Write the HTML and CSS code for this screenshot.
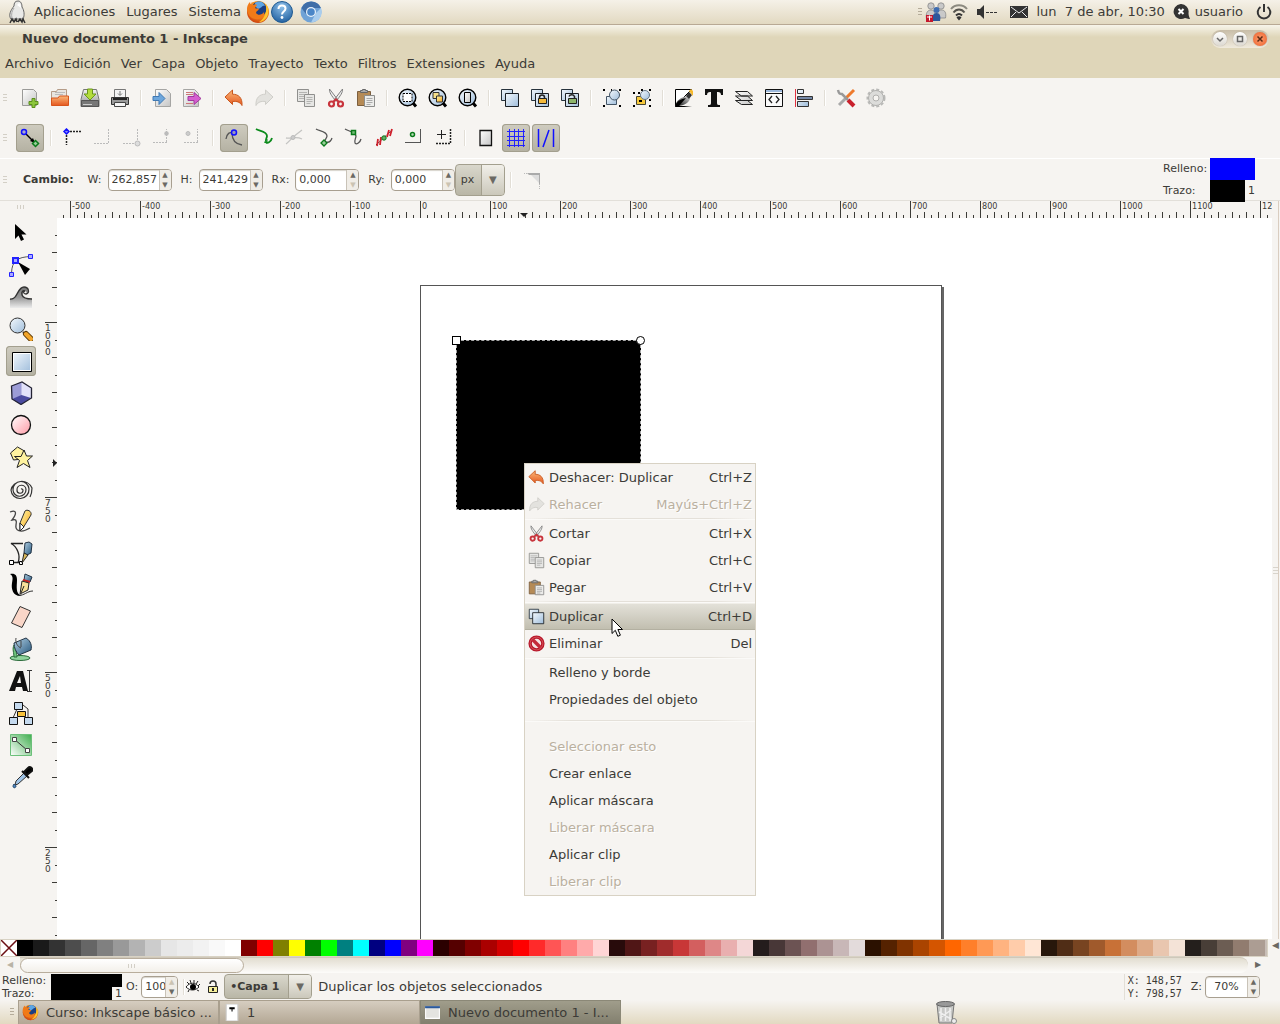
FILE: index.html
```html
<!DOCTYPE html>
<html lang="es">
<head>
<meta charset="utf-8">
<title>Nuevo documento 1 - Inkscape</title>
<link rel="stylesheet" href="styles.css">
</head>
<body>
<svg class="defs" width="0" height="0" aria-hidden="true">
  <defs>
    <linearGradient id="blue" x1="0" y1="0" x2="1" y2="1"><stop offset="0" stop-color="#f4f9fd"/><stop offset="1" stop-color="#9fbddb"/></linearGradient>
    <linearGradient id="paper" x1="0" y1="0" x2="1" y2="1"><stop offset="0" stop-color="#fff"/><stop offset="1" stop-color="#c4c4c4"/></linearGradient>
    <linearGradient id="orange" x1="0" y1="0" x2="0" y2="1"><stop offset="0" stop-color="#fbb878"/><stop offset="1" stop-color="#e4571f"/></linearGradient>
    <linearGradient id="grey" x1="0" y1="0" x2="0" y2="1"><stop offset="0" stop-color="#f2f2f2"/><stop offset="1" stop-color="#8f8f8f"/></linearGradient>
    <linearGradient id="wave" x1="0" y1="0" x2="0" y2="1"><stop offset="0" stop-color="#777"/><stop offset=".5" stop-color="#999"/><stop offset="1" stop-color="#ececec"/></linearGradient>
    <linearGradient id="gold" x1="0" y1="0" x2="1" y2="1"><stop offset="0" stop-color="#fff9a8"/><stop offset="1" stop-color="#f5a21c"/></linearGradient>
    <linearGradient id="pink" x1="0" y1="0" x2="1" y2="1"><stop offset="0" stop-color="#fff"/><stop offset="1" stop-color="#ff9aa6"/></linearGradient>
    <linearGradient id="green" x1="0" y1="1" x2="1" y2="0"><stop offset="0" stop-color="#fff"/><stop offset="1" stop-color="#3fae4e"/></linearGradient>
    <linearGradient id="steel" x1="0" y1="0" x2="1" y2="1"><stop offset="0" stop-color="#b5d2e6"/><stop offset="1" stop-color="#27587e"/></linearGradient>
    <linearGradient id="ink" x1="0" y1="1" x2="1" y2="0"><stop offset="0" stop-color="#000"/><stop offset="1" stop-color="#ddd"/></linearGradient>
    <radialGradient id="ball" cx=".5" cy=".25" r=".8"><stop offset="0" stop-color="#8fc1ea"/><stop offset="1" stop-color="#1d5c9c"/></radialGradient>
    <radialGradient id="fire" cx=".6" cy=".3" r=".8"><stop offset="0" stop-color="#ffd23c"/><stop offset=".5" stop-color="#f28a1c"/><stop offset="1" stop-color="#c4300c"/></radialGradient>
  </defs>
  <symbol id="i-undo" viewBox="0 0 20 20"><path d="M1 9 8.500 2v4.200c6 0 10 3.500 9.500 11.300-2-3.500-5-4.500-9.500-4v3z" fill="url(#orange)" stroke="#c9561c"/></symbol>
  <symbol id="i-redo" viewBox="0 0 20 20"><path d="M19 9 11.500 2v4.200c-6 0-10 3.500-9.500 11.300 2-3.500 5-4.500 9.500-4v3z" fill="#e3e2de" stroke="#cfcec9"/></symbol>
  <symbol id="i-cut" viewBox="0 0 20 20"><path d="M3.500 1c-.5 3 2 7 6.500 12l2-1zM16.500 1c.5 3-2 7-6.500 12l-2-1z" fill="#eee" stroke="#808080"/><g fill="none" stroke="#c8343c" stroke-width="2.200"><ellipse cx="5.500" cy="16" rx="2.500" ry="2.500"/><ellipse cx="14.500" cy="16" rx="2.500" ry="2.500"/><path d="M7 14l3-2.500 3 2.500"/></g></symbol>
  <symbol id="i-copy" viewBox="0 0 20 20"><g fill="#e6e6e4" stroke="#8f8f8d"><path d="M1.500 1.500h11v12h-11z"/><path d="M3 4.500h8M3 6.500h5M3 8.500h5M3 10.500h5" stroke="#b4b4b2"/><path d="M8.500 6.500h10v12h-10z"/><path d="M10.500 9.500h6M10.500 11.500h6M10.500 13.500h6M10.500 15.500h4" stroke="#b4b4b2"/></g></symbol>
  <symbol id="i-paste" viewBox="0 0 20 20"><path d="M1.500 3.500h13v14h-13z" fill="#b58a55" stroke="#7c5f3e"/><path d="M4.500 4.500h7v-2h-2v-1h-3v1h-2z" fill="#aaa" stroke="#666"/><path d="M8.500 7.500h10v11h-10z" fill="#ececea" stroke="#8d8d8b"/><path d="M10.500 10.500h6M10.500 12.500h6M10.500 14.500h6M10.500 16.500h4" stroke="#aaa"/></symbol>
  <symbol id="i-dup" viewBox="0 0 20 20"><path d="M1.500 1.500h11v11h-11z" fill="url(#blue)" stroke="#26323c"/><path d="M5.500 5.500h13v13h-13z" fill="url(#blue)" stroke="#1a1f24"/></symbol>
  <symbol id="i-magnifier" viewBox="0 0 20 20"><path d="m14.500 14.500 3.500 4" stroke="#000" stroke-width="3"/><circle cx="9.500" cy="9.500" r="8.300" fill="url(#blue)" stroke="#000" stroke-width="1.400"/></symbol>
  <symbol id="i-firefox" viewBox="0 0 24 24"><circle cx="12" cy="12" r="11" fill="url(#fire)"/><circle cx="13" cy="9" r="7.500" fill="#1c3f82"/><path d="M9 3c4-3 9-1 10 3-3-1-3 2-5 2-1 2-5 0-5-5z" fill="#5da5e4"/><path d="M1 9c0-3 1-5 3-7 0 2 1 3 3 3 2-1 3-1 4 0L9 8c1 1 3 0 4 1-1 2-3 2-3 4 2 3 6 2 8-1 1 5-4 8-8 7C5 19 1 14 1 9z" fill="#f07a18"/><path d="M20 4c3 4 3 9 1 13-2 3-5 5-8 5 6-4 8-10 7-18z" fill="#ffc52e"/></symbol>
</svg>

<header class="panel">
  <svg class="i24" viewBox="0 0 24 24"><path d="M14 1c3 0 4 3 4 6 2 3 3 8 1 12H7C4 15 7 10 10 6c0-3 1-5 4-5z" fill="#e9e9e7" stroke="#666"/><path d="M15 3c2 1 2 3 2 5l-4-3z" fill="#fff"/><path d="M10 8c-2 3-3 6-2 10" stroke="#aaa" fill="none"/><path d="M6 23l2-4 2 3 2-3 1 3M14 22l2-3 2 3 1-3 2 4" stroke="#333" stroke-width="1.500" fill="none"/></svg>
  <nav class="panel-menu"><a href="#">Aplicaciones</a><a href="#">Lugares</a><a href="#">Sistema</a></nav>
  <svg class="i24"><use href="#i-firefox"/></svg>
  <svg class="i24" viewBox="0 0 24 24"><circle cx="12" cy="12" r="10.500" fill="url(#ball)" stroke="#1f5a92"/><path d="M8.500 9c0-5 7-4.500 7-.5 0 3-3.500 3-3.500 6" fill="none" stroke="#fff" stroke-width="2"/><circle cx="12" cy="17.500" r="1.400" fill="#fff"/></svg>
  <svg class="i24 chromium" viewBox="0 0 24 24"><circle cx="12" cy="12" r="10.500" fill="#6fa2d6"/><path d="M2.500 8A10.500 10.500 0 0 1 22 8H12L7 14z" fill="#3f6ea8"/><path d="M22 8a10.500 10.500 0 0 1-10 14.500L17 13z" fill="#a9cdee"/><circle cx="12" cy="12" r="5" fill="#e9f2fa"/><circle cx="12" cy="12" r="3.800" fill="#4a86c8"/></svg>
  <div class="tray">
    <i class="grip"></i>
    <svg class="i22" viewBox="0 0 22 22"><g fill="#c9c9c9" stroke="#888" stroke-width=".8"><circle cx="6" cy="5" r="3.200"/><path d="M1.500 18c-1-6 1-9 4.500-9s5 3 4.500 9z"/><circle cx="16" cy="5" r="3.200"/><path d="M12 17c-1-6 1-8 4.500-8s5 3 4 8z"/></g><circle cx="11.500" cy="9" r="3" fill="#3f6db0"/><path d="M8 20c-1-5 0-8 3.500-8s4.500 3 3.500 8z" fill="#2c569b"/><path d="M1 14h7v7H1z" fill="#c4182c"/><path d="M2 16h5M4.500 14.500v5" stroke="#fff"/></svg>
    <svg class="i18" viewBox="0 0 18 18"><g fill="none" stroke-width="2"><path d="M1 6c4-5 12-5 16 0" stroke="#8c8a80"/><path d="M3.500 9.500c3-4 8-4 11 0" stroke="#55534d"/><path d="M6 12.500c2-2 4-2 6 0" stroke="#333"/></g><path d="M6.500 14.500a3 3 0 0 1 5 0L9 17.500z" fill="#333"/></svg>
    <svg class="vol" viewBox="0 0 22 18"><path d="M1 6h3l4-4v14l-4-4H1z" fill="#333"/><path d="M10 9.500h12" stroke="#333" stroke-dasharray="3 1"/></svg>
    <svg class="i18 mail" viewBox="0 0 18 18"><path d="M0 3h18v12H0z" fill="#333"/><path d="m1 4 8 6 8-6M1 14l5-5M17 14l-5-5" stroke="#eee" fill="none"/></svg>
    <span>lun&nbsp; 7 de abr, 10:30</span>
    <svg class="i18 chat" viewBox="0 0 18 18"><path d="M16 16l-4-1a7.500 7.500 0 1 1 3.500-5c0 3 1 4 1.500 6z" fill="#333"/><path d="m5.500 6 5 5m0-5-5 5" stroke="#fff" stroke-width="2"/></svg>
    <span>usuario</span>
    <svg class="i18 power" viewBox="0 0 18 18"><path d="M5.500 4a6.300 6.300 0 1 0 7 0M9 1v8" fill="none" stroke="#333" stroke-width="2"/></svg>
  </div>
</header>

<div class="titlebar">
  <h1>Nuevo documento 1 - Inkscape</h1>
  <div class="winbtns">
    <button aria-label="Minimizar"><svg viewBox="0 0 14 14"><path d="m4 6 3 3 3-3" fill="none" stroke="#666" stroke-width="1.500"/></svg></button>
    <button aria-label="Maximizar"><svg viewBox="0 0 14 14"><path d="M4.500 4.500h5v5h-5z" fill="none" stroke="#666" stroke-width="1.500"/></svg></button>
    <button class="close" aria-label="Cerrar"><svg viewBox="0 0 14 14"><path d="m4.500 4.500 5 5m0-5-5 5" stroke="#5b2a16" stroke-width="1.500"/></svg></button>
  </div>
</div>
<nav class="menubar"><a href="#">Archivo</a><a href="#">Edición</a><a href="#">Ver</a><a href="#">Capa</a><a href="#">Objeto</a><a href="#">Trayecto</a><a href="#">Texto</a><a href="#">Filtros</a><a href="#">Extensiones</a><a href="#">Ayuda</a></nav>

<div class="toolbar">
  <i class="grip"></i>
  <button aria-label="Nuevo"><svg viewBox="0 0 20 20"><path d="M2.500 1.500h11l3 3v13h-14z" fill="url(#paper)" stroke="#9a9a98"/><path d="M12 10.500h3v3h3v3h-3v3h-3v-3H9v-3h3z" fill="#8cc63c" stroke="#5b8f1c"/></svg></button>
  <button aria-label="Abrir"><svg viewBox="0 0 20 20"><path d="M1.500 17V3.500h5l1-2h9V17z" fill="#e8e5e0" stroke="#b59c88"/><path d="M5 4.500h10M5 6.500h8" stroke="#bbb"/><path d="M1.500 17.500V10H8l1.500-2h9v9.500z" fill="url(#orange)" stroke="#d8541c"/></svg></button>
  <button aria-label="Guardar"><svg viewBox="0 0 20 20"><path d="M3.500 1.500h13l2.500 10v7H1v-7z" fill="url(#grey)" stroke="#777"/><path d="M1.500 12.500h17v6h-17z" fill="#777" stroke="#555"/><path d="M3 16.500h9" stroke="#ccc"/><path d="M7.500 1h5v5h3.500l-6 6-6-6h3.500z" fill="#b4dc3c" stroke="#6b981c"/></svg></button>
  <button aria-label="Imprimir"><svg viewBox="0 0 20 20"><path d="M4.500 1.500h11v9h-11z" fill="#f2f2f2" stroke="#777"/><path d="M10 3v4M8 5.500l2 2 2-2" stroke="#777" fill="none"/><path d="M1.500 9.500h17v7h-17z" fill="#999" stroke="#333"/><path d="M3 11h14" stroke="#222" stroke-width="2"/><path d="M4.500 14.500h11v4h-11z" fill="#f4f4f4" stroke="#444"/></svg></button>
  <i class="sep"></i>
  <button aria-label="Importar"><svg viewBox="0 0 20 20"><path d="M3.500 1.500h11l4 4v13h-15z" fill="url(#paper)" stroke="#a5a5a3"/><path d="M1 8.500h6v-4l6 6-6 6v-4H1z" fill="#6da6dc" stroke="#3e78b4"/></svg></button>
  <button aria-label="Exportar"><svg viewBox="0 0 20 20"><path d="M1.500 1.500h11l4 4v13h-15z" fill="url(#paper)" stroke="#a5a5a3"/><path d="M4 4.500h7M4 6.500h7M4 15.500h7" stroke="#c77"/><path d="M6 8.500h6v-4l7 6-7 6v-4H6z" fill="#d65fd0" stroke="#a03a9c"/></svg></button>
  <i class="sep"></i>
  <button aria-label="Deshacer"><svg><use href="#i-undo"/></svg></button>
  <button aria-label="Rehacer" disabled><svg><use href="#i-redo"/></svg></button>
  <i class="sep"></i>
  <button aria-label="Copiar"><svg><use href="#i-copy"/></svg></button>
  <button aria-label="Cortar"><svg><use href="#i-cut"/></svg></button>
  <button aria-label="Pegar"><svg><use href="#i-paste"/></svg></button>
  <i class="sep"></i>
  <button aria-label="Zoom a selección"><svg viewBox="0 0 20 20"><use href="#i-magnifier" width="20" height="20"/><path d="M5 5.500h9v8H5z" fill="#fff" stroke="#000" stroke-dasharray="2 1"/></svg></button>
  <button aria-label="Zoom a dibujo"><svg viewBox="0 0 20 20"><use href="#i-magnifier" width="20" height="20"/><path d="M5 4.500h6v6H5z" fill="#f6e08a" stroke="#333"/><path d="M8.500 8h6v6h-6z" fill="url(#gold)" stroke="#333"/></svg></button>
  <button aria-label="Zoom a página"><svg viewBox="0 0 20 20"><use href="#i-magnifier" width="20" height="20"/><path d="M6.500 4.500h6v10h-6z" fill="url(#paper)" stroke="#000"/></svg></button>
  <i class="sep"></i>
  <button aria-label="Duplicar"><svg><use href="#i-dup"/></svg></button>
  <button aria-label="Clonar"><svg viewBox="0 0 20 20"><use href="#i-dup" width="20" height="20"/><path d="M9.500 11V9.500a2.500 2.500 0 0 1 5 0V11" fill="none" stroke="#222" stroke-width="1.500"/><path d="M8.500 10.500h8v5h-8z" fill="#f4b93a" stroke="#222"/></svg></button>
  <button aria-label="Desvincular clon"><svg viewBox="0 0 20 20"><use href="#i-dup" width="20" height="20"/><path d="M9 8.500a3 3 0 0 1 5.500 0V11" fill="none" stroke="#222" stroke-width="1.500"/><path d="M8.500 10.500h8v5h-8z" fill="#8cb46a" stroke="#222"/></svg></button>
  <i class="sep"></i>
  <button aria-label="Agrupar"><svg viewBox="0 0 20 20"><path d="M1 1h2v2H1zM17 1h2v2h-2zM1 17h2v2H1zM17 17h2v2h-2zM9 1h1v2H9z"/><path d="M4.500 8.500h10v8h-10z" fill="url(#blue)" stroke="#456"/><circle cx="12.500" cy="7" r="5" fill="url(#blue)" stroke="#456"/></svg></button>
  <button aria-label="Desagrupar"><svg viewBox="0 0 20 20"><path d="M1 4h2v2H1zM6 4h2v2H6zM17 1h2v2h-2zM1 17h2v2H1zM17 17h2v2h-2zM17 11h2v2h-2zM9 1h2v2H9z"/><path d="M4.500 8.500h9v8h-9z" fill="#f7c93c" stroke="#443"/><circle cx="13" cy="7" r="4.500" fill="url(#blue)" stroke="#678"/><path d="M7 12h3v2H7z"/></svg></button>
  <i class="sep"></i>
  <button aria-label="Relleno y borde"><svg viewBox="0 0 20 20"><path d="M1.500 1.500h16l-16 16z" fill="#fff" stroke="#000"/><path d="M1 18.500C2 12 8 9 13 8l3 3c-2 5-8 7-15 7.500z" fill="url(#ink)"/><path d="M1 19C3 12 8 11 12 10l-7 8h13L10 19z"/><path d="m12 8 3-4 3 3-3 4z" fill="#333"/><path d="m15 3 2-2 2 2v5z" fill="#f6b92c"/></svg></button>
  <button aria-label="Texto y tipografía"><svg viewBox="0 0 20 20"><path d="M1 1h18v6h-2c0-2-1-3-3-3h-1v11c0 2 1 2 3 2v2H4v-2c2 0 3 0 3-2V4H6C4 4 3 5 3 7H1z" fill="#111"/></svg></button>
  <button aria-label="Capas"><svg viewBox="0 0 20 20"><g fill="url(#paper)" stroke="#222"><path d="M1.500 12.500h12l5 4h-11zM1.500 8h12l5 4.500h-11zM1.500 3.500h12l5 4.500h-11z"/></g></svg></button>
  <button aria-label="Editor XML"><svg viewBox="0 0 20 20"><path d="M1.500 1.500h17v17h-17z" fill="#fafafa" stroke="#111"/><path d="M2 3h16" stroke="#9db9dc" stroke-width="2"/><path d="M1 5.500h18" stroke="#111"/><path d="m8 8-3 3.500L8 15M12 8l3 3.500-3 3.500" fill="none" stroke="#222" stroke-width="1.300"/></svg></button>
  <button aria-label="Alinear y distribuir"><svg viewBox="0 0 20 20"><path d="M1.500 1v18" stroke="#e03040"/><path d="M3.500 1.500h6v4h-6zM3.500 13.500h11v5h-11z" fill="url(#blue)" stroke="#333"/><path d="M3.500 8.500h15v3h-15z" fill="#7488a8" stroke="#333"/></svg></button>
  <i class="sep"></i>
  <button aria-label="Preferencias"><svg viewBox="0 0 20 20"><path d="m3 17 8-8" stroke="#aaa" stroke-width="3"/><path d="m10 10 8-8" stroke="#ee7a2c" stroke-width="3"/><path d="M2 2c1 4 2 4 4 4l6 6" fill="none" stroke="#999" stroke-width="2.500"/><path d="m12 12 6 6" stroke="#c8202c" stroke-width="4"/></svg></button>
  <button aria-label="Propiedades del documento"><svg viewBox="0 0 20 20"><circle cx="10" cy="10" r="8.500" fill="none" stroke="#b9b9b7" stroke-width="2" stroke-dasharray="3 2"/><circle cx="10" cy="10" r="7.500" fill="#dcdcda" stroke="#b0b0ae"/><circle cx="10" cy="10" r="3" fill="#f6f4f1" stroke="#b0b0ae"/></svg></button>
</div>

<div class="toolbar">
  <i class="grip"></i>
  <button class="on" aria-label="Activar ajuste"><svg viewBox="0 0 20 20"><path d="m5 5 8 8" stroke="#000" stroke-width="1.500"/><path d="m15 15-5-2 3-3z"/><circle cx="4" cy="4" r="2.500" fill="#aac" stroke="#11f" stroke-width="1.500"/><path d="m15.500 12.500 3 3-3 3-3-3z" fill="#9c9" stroke="#0a7a1a" stroke-width="1.500"/></svg></button>
  <i class="sep"></i>
  <button aria-label="Ajustar cajas"><svg viewBox="0 0 20 20"><path d="M5 3.500h14M4.500 4v13" stroke="#222" stroke-width="1.500" stroke-dasharray="2 1"/><path d="m4.500 1 2.500 2.500L4.500 6 2 3.500z" fill="#88f" stroke="#11f" stroke-width="1.500"/></svg></button>
  <button disabled aria-label="Bordes"><svg viewBox="0 0 20 20"><path d="M2 15.500h15M16.500 15V1" stroke="#bbb" stroke-dasharray="2 1"/></svg></button>
  <button disabled aria-label="Esquinas"><svg viewBox="0 0 20 20"><path d="M1 15.500h13M15.500 12V1" stroke="#bbb" stroke-dasharray="2 1"/><circle cx="15.500" cy="15.500" r="2.500" fill="#ddd" stroke="#bbb"/></svg></button>
  <button disabled aria-label="Puntos medios"><svg viewBox="0 0 20 20"><path d="M1 14.500h15M14.500 14V1" stroke="#bbb" stroke-dasharray="2 1"/><circle cx="14.500" cy="5.500" r="2.200" fill="#bbb"/></svg></button>
  <button disabled aria-label="Centros"><svg viewBox="0 0 20 20"><path d="M2 14.500h15M15.500 14V1" stroke="#bbb" stroke-dasharray="2 1"/><circle cx="6" cy="5.500" r="2" fill="#ccc" stroke="#bbb"/></svg></button>
  <i class="sep"></i>
  <button class="on" aria-label="Ajustar nodos"><svg viewBox="0 0 20 20"><path d="M2 11C3 5 6 4 8 5c0 6 3 11 10 12" fill="none" stroke="#555" stroke-width="1.300"/><circle cx="10" cy="4.500" r="2.500" fill="#99b" stroke="#11f" stroke-width="1.500"/></svg></button>
  <button aria-label="Trayectos"><svg viewBox="0 0 20 20"><path d="M2 1c3 2 11 2 11 7 0 2-2 4-1 6s5 0 6-4" fill="none" stroke="#0a8a1a" stroke-width="1.800"/><path d="m10 14 3 1v-4" fill="none" stroke="#0a8a1a"/></svg></button>
  <button disabled aria-label="Intersecciones"><svg viewBox="0 0 20 20"><path d="M2 16C5 14 8 9 18 2M2 10c5 1 10-2 16 1" fill="none" stroke="#c4c4c2" stroke-width="1.300"/><circle cx="9" cy="9.500" r="2" fill="#ccc" stroke="#bbb"/></svg></button>
  <button aria-label="Nodos cúspide"><svg viewBox="0 0 20 20"><path d="M2 1c3 2 11 2 11 7 0 2-3 4-2 6M12 14c3 1 5-1 6-4" fill="none" stroke="#555" stroke-width="1.300"/><path d="m10 12 3 3-3 3-3-3z" fill="#9c9" stroke="#0a7a1a" stroke-width="1.300"/></svg></button>
  <button aria-label="Nodos suaves"><svg viewBox="0 0 20 20"><path d="M1 1c3 2 10 3 11 7 0 2-2 5-1 7s5 0 6-4" fill="none" stroke="#555" stroke-width="1.300"/><path d="M7.500 2.500h4v4h-4z" fill="#7b7" stroke="#0a7a1a" stroke-width="1.500"/></svg></button>
  <button aria-label="Puntos medios de segmento"><svg viewBox="0 0 20 20"><path d="m2 17 15-14" stroke="#222" stroke-dasharray="2 1"/><path d="m3 18 1-7M6 17l1-8M13 9l2-7M16 8l2-7" stroke="#d0202c" stroke-width="1.800"/><circle cx="10" cy="10" r="2.200" fill="#6a6" stroke="#0a7a1a"/></svg></button>
  <button aria-label="Centros de objeto"><svg viewBox="0 0 20 20"><path d="M1 14.500h16M16.500 15V1" stroke="#555"/><circle cx="8.500" cy="6.500" r="2" fill="#bdb" stroke="#0a7a1a" stroke-width="1.500"/></svg></button>
  <button aria-label="Centro de rotación"><svg viewBox="0 0 20 20"><path d="M7.500 2v9M3 6.500h9" stroke="#222"/><path d="M2 15.500h15M16.500 15V1" stroke="#222" stroke-width="1.500" stroke-dasharray="2 1"/></svg></button>
  <i class="sep"></i>
  <button aria-label="Borde de página"><svg viewBox="0 0 20 20"><path d="M4 2.500h11.500v15H4z" fill="url(#paper)" stroke="#111" stroke-width="1.300"/></svg></button>
  <button class="on" aria-label="Rejilla"><svg viewBox="0 0 20 20"><path d="M1 3.500h18M1 8.500h18M1 12.500h18M1 17.500h18M3.500 1v18M8.500 1v18M12.500 1v18M17.500 1v18" stroke="#22f"/></svg></button>
  <button class="on" aria-label="Guías"><svg viewBox="0 0 20 20"><path d="M2.500 1v18M17.500 1v18M7 19l6-17" stroke="#11f" stroke-width="1.500"/></svg></button>
</div>

<div class="controls">
  <i class="grip"></i>
  <b>Cambio:</b>
  <label for="w">W:</label><span class="spin"><input id="w" value="262,857"><span><button aria-label="Más">▲</button><button aria-label="Menos">▼</button></span></span>
  <label for="h">H:</label><span class="spin"><input id="h" value="241,429"><span><button aria-label="Más">▲</button><button aria-label="Menos">▼</button></span></span>
  <label for="rx">Rx:</label><span class="spin"><input id="rx" value="0,000"><span><button aria-label="Más">▲</button><button aria-label="Menos" disabled>▼</button></span></span>
  <label for="ry">Ry:</label><span class="spin"><input id="ry" value="0,000"><span><button aria-label="Más">▲</button><button aria-label="Menos" disabled>▼</button></span></span>
  <span class="combo unit-combo"><select aria-label="Unidad"><option>px</option></select><span>▼</span></span>
  <i class="sep"></i>
  <button class="plain" aria-label="Esquinas rectas" disabled><svg viewBox="0 0 20 20"><path d="M4 3h13v12h-1V5H6z" fill="#aaa"/><path d="M1 3.500h4M16.500 14v5" stroke="#bbb" stroke-dasharray="1 1"/><path d="M8 5h8v8z" fill="#ddd"/></svg></button>
  <dl class="style"><dt>Relleno:</dt><dd><i class="fill"></i></dd><dt>Trazo:</dt><dd><i class="stroke"></i>1</dd></dl>
</div>

<main>
  <aside class="toolbox">
    <i class="grip across"></i>
    <button aria-label="Seleccionar"><svg viewBox="0 0 24 24"><path d="M6 3v15l3.500-3.500L12 20l3-1.500-2.500-5h5z"/></svg></button>
    <button aria-label="Nodos"><svg viewBox="0 0 24 24"><path d="M2.500 20C3 8 8 4 22 3.500" fill="none" stroke="#555"/><path d="m9 9 12 7-5 6z"/><g fill="#aaf" stroke="#22f"><path d="M.5 19.500h4v4h-4zM19.500 1.500h4v4h-4z"/><path d="M4 5h5v5H4z" stroke-width="2"/></g></svg></button>
    <button aria-label="Retoque"><svg viewBox="0 0 24 24"><path d="M1 14c8 1 7-12 14-12 5 0 6 6 2 7 2-3-2-4-3-1-1 4 3 7 9 6v9H1z" fill="url(#wave)"/><path d="M1 14c8 1 7-12 14-12 5 0 6 6 2 7-3 0-3-3-1-3-2-1-4 1-3 4s4 4 10 4" fill="none" stroke="#333" stroke-width="1.300"/></svg></button>
    <button aria-label="Zoom"><svg viewBox="0 0 24 24"><path d="m14 15 3 3" stroke="#333" stroke-width="2"/><path d="m17 17 5 5" stroke="#5c3a08" stroke-width="6" stroke-linecap="round"/><path d="m17 17 5 5" stroke="#f2a52a" stroke-width="4" stroke-linecap="round"/><circle cx="8.500" cy="8.500" r="7.500" fill="url(#blue)" stroke="#333"/></svg></button>
    <button class="on" aria-label="Rectángulo"><svg viewBox="0 0 24 24"><path d="M3.500 3.500h19v19h-19z" fill="url(#blue)" stroke="#000"/><path d="M4.500 4.500h17v17h-17z" fill="none" stroke="#fff"/></svg></button>
    <button aria-label="Caja 3D"><svg viewBox="0 0 24 24"><path d="M2.500 5 13 1l9.500 6v10L12 23.500 3 18z" fill="#e2e2fa"/><path d="m2.500 5 10-4v14L3 18z" fill="#9c9cd6"/><path d="m3 18 9.500-4 9.500 3-10 6.500z" fill="#4a4aa0"/><path d="M2.500 5 13 1l9.500 6v10L12 23.500 3 18z" fill="none" stroke="#223" stroke-width="1.300"/></svg></button>
    <button aria-label="Elipse"><svg viewBox="0 0 24 24"><circle cx="12" cy="12" r="9.500" fill="url(#pink)" stroke="#111" stroke-width="1.300"/></svg></button>
    <button aria-label="Estrella"><svg viewBox="0 0 24 24"><g fill="#fff3a0" stroke="#222"><path d="m1.500 8 7-6 7 4-2 8-9 1z"/><path d="m15 5 2.500 6h6l-5 4.500 2.500 7-6.500-4-6.500 4 2.500-7-5-4h6.500z"/></g></svg></button>
    <button aria-label="Espiral"><svg viewBox="0 0 24 24"><path d="M12 12a1.500 1.500 0 0 1 2 1.500A3 3 0 0 1 8 13a4.500 4.500 0 0 1 9-.5 6.500 6.500 0 0 1-13 .5 8 8 0 0 1 16-1 9 9 0 0 1-18 1A11 10.500 0 0 1 23 11c0 4-.5 6-2 9" fill="none" stroke="#333" stroke-width="1.200"/></svg></button>
    <button aria-label="Lápiz"><svg viewBox="0 0 24 24"><path d="M1 3c8-3 6 3 2 8 4-1 5 0 4 5s4 9 14 3" fill="none" stroke="#444" stroke-width="1.300"/><path d="M16 2c2-2 7 0 6 4l-8 13-3 2v-7z" fill="url(#gold)" stroke="#333"/><path d="m11 14 4 4-4 4z" fill="#fff" stroke="#222"/></svg></button>
    <button aria-label="Pluma"><svg viewBox="0 0 24 24"><path d="M14 2.500H2c6 3 10 12 7 19M2 21.500h12" fill="none" stroke="#222" stroke-width="1.300"/><path d="M.5 19.500h4v4h-4zM10.500 20.500h3v3h-3z" fill="#fff" stroke="#000"/><path d="m16 2 4-1 3 2-1 9-4 2-3-2z" fill="url(#steel)" stroke="#234"/><path d="m15 12 4 2-6 8z" fill="#d9b95c" stroke="#222"/></svg></button>
    <button aria-label="Caligrafía"><svg viewBox="0 0 24 24"><path d="M1 1c5-1 7 1 7 6 0 6-2 14 5 16C4 24 2 16 3 10 4 5 4 3 1 1z"/><path d="M10 22c5 1 8-4 14-4" fill="none" stroke="#333"/><path d="m16 1 7 3-2 5-6-2z" fill="url(#steel)" stroke="#234"/><path d="m14 7 7 2" stroke="#c22" stroke-width="2"/><path d="m13 8 7 2-1 7-8 4z" fill="#f7e09a" stroke="#222"/><path d="m12 20 3-7" stroke="#222"/></svg></button>
    <button aria-label="Borrador"><svg viewBox="0 0 24 24"><path d="M11 1.500 21.500 6 13 22.500 2.500 18z" fill="#f9d6c8" stroke="#333"/></svg></button>
    <button aria-label="Cubo de pintura"><svg viewBox="0 0 24 24"><ellipse cx="11" cy="21" rx="10" ry="2.500" fill="#8fd39c" stroke="#2a6a3a"/><path d="M5 8c-2 4 0 8 0 12h3c0-4-2-7 0-10z" fill="#6fc47e" stroke="#2a6a3a"/><path d="m5 6 12-5c5 3 6 8 5 12L10 18C7 15 5 11 5 6z" fill="url(#steel)" stroke="#234"/><path d="M7 1c-1 5 2 9 5 10M12 4v6" fill="none" stroke="#444"/></svg></button>
    <button aria-label="Texto"><svg viewBox="0 0 24 24"><path d="M8 2h6l5 20h-5l-1-4H7l-1 4H0zM11 7l-3 7h4z" fill="#111" fill-rule="evenodd"/><path d="M18 1.500h5M18 22.500h5M20.500 2v20" stroke="#333"/></svg></button>
    <button aria-label="Conector"><svg viewBox="0 0 24 24"><path d="m8 8-4 9M14 4l5 4v9" fill="none" stroke="#333"/><path d="M5.500 1.500h8v7h-8zM.5 16.500h8v7h-8zM15.500 16.500h8v7h-8z" fill="#c4d9ee" stroke="#111"/><path d="M8.500 10.500h8v5h-8z" fill="#f7c23c" stroke="#111"/></svg></button>
    <button aria-label="Degradado"><svg viewBox="0 0 24 24"><path d="M1.500 1.500h21v21h-21z" fill="url(#green)" stroke="#6cc07a"/><path d="m5 6 13 11" stroke="#333"/><path d="M3.500 4.500h4v4h-4zM16.500 15.500h4v4h-4z" fill="#fff" stroke="#444"/></svg></button>
    <button aria-label="Cuentagotas"><svg viewBox="0 0 24 24"><path d="m15 8 3 3-9 8-3 1 1-4z" fill="#9fc3e6" stroke="#333"/><path d="m13 6 7 7M15 7l4-4c2-2 5 0 4 3l-5 4z" stroke="#111" stroke-width="2"/><path d="M5 19c-3 4 2 5 2 2 0-1-1-1-2-2z" fill="#4c86c4" stroke="#246"/></svg></button>
  </aside>
  <div class="hruler"><div id="hunits"></div><i class="hmark"></i></div>
  <div class="vruler"><div id="vunits"></div><i class="vmark"></i></div>
  <section class="canvas">
    <div class="sheet"></div>
    <div class="shape"><i class="h-square"></i><i class="h-round"></i></div>
    <div class="context" role="menu">
      <button><svg><use href="#i-undo"/></svg>Deshacer: Duplicar<kbd>Ctrl+Z</kbd></button>
      <button disabled><svg><use href="#i-redo"/></svg>Rehacer<kbd>Mayús+Ctrl+Z</kbd></button>
      <hr>
      <button><svg><use href="#i-cut"/></svg>Cortar<kbd>Ctrl+X</kbd></button>
      <button><svg><use href="#i-copy"/></svg>Copiar<kbd>Ctrl+C</kbd></button>
      <button><svg><use href="#i-paste"/></svg>Pegar<kbd>Ctrl+V</kbd></button>
      <hr>
      <button class="hover"><svg><use href="#i-dup"/></svg>Duplicar<kbd>Ctrl+D</kbd></button>
      <button><svg viewBox="0 0 20 20"><circle cx="10" cy="10" r="7.500" fill="#f4e4e4" stroke="#b8182c" stroke-width="4"/><path d="m5 5 10 10" stroke="#c42a3a" stroke-width="4"/><circle cx="10" cy="10" r="7.500" fill="none" stroke="#d8585c"/></svg>Eliminar<kbd>Del</kbd></button>
      <hr>
      <button class="noicon">Relleno y borde</button>
      <button class="noicon">Propiedades del objeto</button>
      <hr class="wide">
      <button class="noicon" disabled>Seleccionar esto</button>
      <button class="noicon">Crear enlace</button>
      <button class="noicon">Aplicar máscara</button>
      <button class="noicon" disabled>Liberar máscara</button>
      <button class="noicon">Aplicar clip</button>
      <button class="noicon" disabled>Liberar clip</button>
    </div>
    <svg class="pointer" viewBox="0 0 12 20"><path d="M1 1v14.500l3.300-3.200 2.500 6 2.600-1.100-2.500-5.700H11.500z" fill="#fff" stroke="#000"/></svg>
  </section>
  <div class="dock"><i></i></div>
</main>

<div class="palette-row">
  <div class="palette" id="palette"><button class="none" aria-label="Ninguno"><svg viewBox="0 0 16 16"><path d="m0 0 16 16M16 0 0 16" stroke="#6b0f14" stroke-width="1.500"/></svg></button></div>
  <button class="plain arrow" aria-label="Menú de paleta">◀</button>
</div>
<div class="scroll"><span class="off">◀</span><div class="track"><div class="thumb"><i class="grip across"></i></div></div><span>▶</span></div>

<footer class="status">
  <dl class="style"><dt>Relleno:</dt><dd><i class="fill"></i></dd><dt>Trazo:</dt><dd><i class="stroke"></i>1</dd></dl>
  <label for="o">O:</label><span class="spin opacity"><input id="o" value="100"><span><button aria-label="Más" disabled>▲</button><button aria-label="Menos">▼</button></span></span>
  <i class="sep"></i>
  <button class="plain" aria-label="Visibilidad"><svg viewBox="0 0 16 16"><path d="M1 8c4-5 9-5 13 0-4 4-9 4-13 0z" fill="#fff" stroke="#222"/><circle cx="8" cy="8" r="3"/><path d="M4 5 2 3M6 4 5 1M9 4V1M11 5l2-3M13 7l2-2M4 11l-1 2M12 11l2 1" stroke="#222"/></svg></button>
  <button class="plain" aria-label="Bloqueo"><svg viewBox="0 0 16 16"><path d="M5 5c0-4 6-4 6 0v3" fill="none" stroke="#333" stroke-width="1.500"/><path d="M3.500 7.500h9v6h-9z" fill="#f5ee9a" stroke="#222"/><path d="M8 9v3" stroke="#222" stroke-width="2"/></svg></button>
  <span class="combo layer-combo"><select aria-label="Capa"><option>•Capa 1</option></select><span>▼</span></span>
  <p>Duplicar los objetos seleccionados</p>
  <dl class="coords"><dt>X:</dt><dd>148,57</dd><dt>Y:</dt><dd>798,57</dd></dl>
  <label for="z">Z:</label><span class="spin zoom"><input id="z" value="70%"><span><button aria-label="Más">▲</button><button aria-label="Menos">▼</button></span></span>
</footer>
<div class="taskbar">
  <i class="grip"></i>
  <button><svg viewBox="0 0 24 24"><use href="#i-firefox"/></svg>Curso: Inkscape básico ...</button>
  <button><svg viewBox="0 0 16 16"><path d="M3 0h11v16H3z" fill="#fff" stroke="#ccc"/><path d="M6 3h5v2H9v2H8V5H6z"/></svg><span>1</span></button>
  <button class="active"><svg viewBox="0 0 16 16"><path d="M1.500 2.500h13v11h-13z" fill="#e4e4e0" stroke="#fff"/><path d="M1 3h14" stroke="#2c5a9c" stroke-width="2"/></svg>Nuevo documento 1 - I...</button>
  <svg class="trash" viewBox="0 0 24 24"><path d="M3 4h17l-2 19H5z" fill="#c8c9c7" stroke="#777"/><ellipse cx="11.500" cy="4" rx="9" ry="2.500" fill="#999" stroke="#666"/><path d="M7 8v13M11.500 8v13M16 8v13M5 12l12 7M17 10 6 18" stroke="#efefef" stroke-width="1.500"/><circle cx="20" cy="21" r="2.500" fill="#eee" stroke="#888"/></svg>
</div>
<script src="main.js"></script>
</body>
</html>
```
FILE: styles.css
```css
* { box-sizing: border-box; }
body {
  margin: 0; height: 100vh; min-width: 960px; display: flex; flex-direction: column; overflow: hidden;
  background: #f6f4f1; color: #3c3b37; font: 13px/16px "DejaVu Sans", sans-serif;
}
button, input, select { font: inherit; color: inherit; margin: 0; padding: 0; border: 0; background: none; }
a { color: inherit; text-decoration: none; }
svg { display: block; flex: none; }
p, dl, dd, h1 { margin: 0; }
.defs { position: absolute; }
.grip { flex: none; width: 4px; height: 8px; background: repeating-linear-gradient(#d3cfc6 0 1px, transparent 1px 3px); }
.grip.across { width: 8px; height: 4px; background: repeating-linear-gradient(90deg, #d3cfc6 0 1px, transparent 1px 3px); }
.sep { flex: none; width: 12px; height: 16px; background: linear-gradient(90deg, transparent 5px, #e2ded6 5px 6px, #fff 6px 7px, transparent 7px); }
.plain { display: flex; align-items: center; justify-content: center; }

/* desktop panel */
.panel { display: flex; align-items: center; height: 25px; padding: 0 7px 0 4px; border-bottom: 1px solid #b8a994; background: linear-gradient(#f5f1e8, #e2d9c1); }
.i24 { width: 24px; height: 24px; }
.i22 { width: 22px; height: 22px; }
.i18 { width: 18px; height: 18px; }
.chromium { margin-left: 5px; }
.panel-menu { display: flex; gap: 11px; padding: 0 5px 0 6px; }
.tray { display: flex; align-items: center; margin-left: auto; }
.tray .i22 { margin: 0 3px; }
.tray .vol { width: 22px; height: 18px; margin: 0 12px 0 8px; }
.tray .mail { margin-right: 8px; }
.tray .chat { margin: 0 4px 0 8px; }
.tray .power { margin-left: 12px; }
.tray .grip { background: repeating-linear-gradient(#b5ac9a 0 1px, transparent 1px 3px); }

.titlebar { display: flex; align-items: center; justify-content: space-between; height: 27px; padding: 0 11px 0 22px; background: linear-gradient(#f7f4ea, #dfd6b9 12px); }
.titlebar h1 { font-size: 13px; line-height: 16px; }
.winbtns { display: flex; gap: 6px; padding: 2px; border-radius: 9px; background: linear-gradient(#c8bda8, #f0eadd); }
.winbtns button { width: 14px; height: 14px; border-radius: 7px; background: linear-gradient(#fff, #dcd8d0); box-shadow: 0 0 1px #8d8575; }
.winbtns .close { background: radial-gradient(#ffa070, #ea5c28); }
.menubar { display: flex; gap: 10px; height: 26px; padding: 4px 5px; background: #dfd6b9; }

/* toolbars */
.toolbar { display: flex; align-items: center; height: 40px; }
.toolbar .grip, .controls > .grip { margin: 0 8px 0 3px; }
.toolbar button { display: flex; align-items: center; justify-content: center; width: 28px; height: 28px; margin: 0 1px; border-radius: 4px; }
.toolbar svg { width: 20px; height: 20px; }
.on { background: linear-gradient(#cfccc0, #b4b1a2); box-shadow: inset 0 0 0 1px #a39f8e; }
.controls { display: flex; align-items: center; height: 43px; border-top: 1px solid #fff; border-bottom: 1px solid #e2dfd9; font-size: 11px; line-height: 14px; }
.controls b { margin: 0 14px 0 8px; }
.controls label { margin-right: 6px; }
.controls .spin { width: 64px; margin-right: 9px; }
.controls .plain svg { width: 20px; height: 20px; margin-left: 6px; }
.spin { display: flex; flex: none; height: 22px; border: 1px solid #a89f90; border-radius: 4px; background: #fff; overflow: hidden; box-shadow: inset 0 1px 1px #d8d4cc; }
.spin input { flex: 1; min-width: 0; padding-left: 3px; font-size: 11px; outline: 0; }
.spin > span { display: flex; flex-direction: column; flex: none; width: 12px; border-left: 1px solid #c9c3b8; background: #f0ede7; }
.spin button { flex: 1; min-height: 0; font-size: 7px; line-height: 10px; color: #6b6963; }
.spin button:disabled { color: #cbc3b2; }
.combo { display: grid; flex: none; border: 1px solid #a39f8e; border-radius: 4px; background: linear-gradient(#d9d7cc, #b9b6a6); font-size: 11px; }
.combo select { grid-area: 1 / 1; appearance: none; padding-left: 5px; }
.combo > span { grid-area: 1 / 1; justify-self: end; display: flex; align-items: center; justify-content: center; width: 23px; border-left: 1px solid #a39f8e; background: linear-gradient(#f1efe9, #cbc8bb); color: #6b6963; font-size: 10px; pointer-events: none; border-radius: 0 3px 3px 0; }
.controls .spin + .combo { margin-left: -9px; }
.unit-combo { width: 50px; height: 32px; }
.style { display: grid; grid-template-columns: 47px auto; align-items: center; }
.style dd { display: flex; align-items: center; gap: 3px; }
.controls .style { margin: 0 25px 0 auto; grid-auto-rows: 22px; }
.style i { width: 45px; height: 22px; background: #00f; }
.style i.stroke { width: 35px; background: #000; }

/* work area */
main { flex: 1; min-height: 0; display: grid; grid-template: 17px minmax(0, 1fr) / 43px 14px minmax(0, 1fr) 8px; }
.toolbox { grid-row: 1 / 3; display: flex; flex-direction: column; align-items: center; gap: 2px; min-height: 0; padding-right: 2px; }
.toolbox .grip { margin: 4px 0 7px; }
.toolbox button { display: flex; align-items: center; justify-content: center; flex: none; width: 30px; height: 30px; border-radius: 4px; }
.toolbox svg { width: 24px; height: 24px; }
.hruler { grid-column: 2 / 4; position: relative; padding-left: 14px; overflow: hidden; font-size: 9px; line-height: 10px; }
#hunits { display: flex; overflow: hidden; height: 17px; }
#hunits span { flex: 0 0 70px; height: 17px; padding-left: 1px; border-left: 1px solid #3c3b37; font-family: "DejaVu Sans Condensed", "DejaVu Sans", sans-serif; font-stretch: condensed;
  background:
    repeating-linear-gradient(90deg, transparent 0 13px, #3c3b37 13px 14px) 0 11px / 69px 6px no-repeat,
    repeating-linear-gradient(90deg, transparent 0 6px, #3c3b37 6px 7px) 0 14px / 69px 3px no-repeat; }
#hunits span:first-child { margin-left: -57px; }
.hmark { position: absolute; left: 477px; bottom: 1px; border: 4px solid transparent; border-top-color: #222; border-bottom: 0; }
.vruler { grid-column: 2; position: relative; overflow: hidden; font-size: 9px; line-height: 8px; }
#vunits { display: flex; flex-direction: column; height: 100%; overflow: hidden; }
#vunits div { flex: 0 0 175px; padding-top: 1px; border-top: 1px solid #3c3b37; margin-left: 2px;
  background:
    repeating-linear-gradient(transparent 0 34px, #3c3b37 34px 35px) 100% 0 / 5px 174px no-repeat,
    repeating-linear-gradient(transparent 0 17px, #3c3b37 17px 18px, transparent 18px 35px) 100% 0 / 2px 174px no-repeat; }
#vunits div:first-child { margin-top: -71px; }
#vunits span { display: block; }
.vmark { position: absolute; right: 0; top: 241px; border: 4px solid transparent; border-left-color: #222; border-right: 0; }
.canvas { position: relative; overflow: hidden; background: #fff; }
.dock { grid-area: 1 / 4 / 3 / 5; display: flex; align-items: center; border-right: 1px solid #d9cdc0; margin-right: 1px; }
.dock i { width: 5px; height: 7px; margin-left: 1px; background: repeating-linear-gradient(#d8d4cc 0 1px, transparent 1px 3px); }
.sheet { position: absolute; left: 363px; top: 67px; bottom: -4px; width: 522px; border: 1px solid #555; box-shadow: 2px 2px 0 #666; }
.shape { position: absolute; left: 399px; top: 122px; width: 185px; height: 170px; background: #000; outline: 1px dashed #aaa; outline-offset: -1px; }
.h-square, .h-round { position: absolute; width: 9px; height: 9px; top: -4px; left: -4px; border: 1px solid #000; background: #fff; }
.h-round { left: 180px; border-radius: 5px; }

.context { position: absolute; left: 467px; top: 245px; width: 232px; border: 1px solid #d8d2c4; background: #f6f4f1; }
.context button { display: flex; align-items: center; width: 100%; height: 27px; padding: 0 3px; gap: 4px; }
.context svg { width: 17px; height: 17px; }
.context kbd { margin-left: auto; font: inherit; }
.context .noicon { padding-left: 24px; }
.context button:disabled { color: #bab09f; text-shadow: 1px 1px 0 #fff; }
.context .hover { background: linear-gradient(#e4e2da, #c0bdae); box-shadow: inset 0 1px 0 #f0eee8, inset 0 -1px 0 #b3b0a1; }
.context hr { height: 2px; margin: 0; border: 0; border-bottom: 1px solid #fbfaf8; background: linear-gradient(90deg, #f6f4f1, #e4e0d9 20%, #e4e0d9 80%, #f6f4f1); }
.context .wide { margin: 7px 0 11px; }
.pointer { position: absolute; left: 554px; top: 400px; width: 12px; height: 20px; }

/* palette and scroll bar */
.palette-row { display: flex; justify-content: space-between; }
.palette { display: flex; flex: 1; height: 18px; margin-right: 12px; border: 1px solid #d8d2c4; overflow: hidden; }
.palette button { flex: 0 0 16px; height: 16px; }
.palette .none { background: #fff; }
.arrow { width: 9px; height: 12px; margin-left: -9px; font-size: 9px; color: #6b6963; }
.scroll { display: flex; height: 16px; padding-right: 12px; line-height: 16px; font-size: 8px; color: #6b6963; }
.scroll > span { flex: none; width: 20px; text-align: center; }
.scroll .off { color: #b9b3a6; }
.track { flex: 1; border-top: 1px solid #cfc8ba; border-radius: 0 8px 8px 0; background: linear-gradient(#e2ddd0, #fdfcfa); }
.thumb { display: flex; align-items: center; justify-content: center; width: 224px; height: 15px; border: 1px solid #b8ad9c; border-radius: 8px; background: linear-gradient(#fff, #f3f0ea); }

.status { display: flex; align-items: center; height: 27px; padding-right: 20px; font-size: 11px; line-height: 13px; }
.status .style { grid-template-columns: 51px 71px; grid-auto-rows: 13px; margin-right: 4px; }
.status .style dt { padding-left: 2px; }
.status .style i { width: 71px; height: 13px; background: #000; }
.status .style .stroke { width: 61px; height: 14px; }
.status .opacity { width: 37px; margin-left: 3px; }
.status .sep { width: 8px; margin-right: -3px; }
.status .plain { width: 20px; }
.status .plain svg { width: 16px; height: 16px; }
.layer-combo { width: 88px; height: 25px; margin-left: 1px; font-weight: bold; }
.status p { margin: 0 auto 0 6px; font-size: 13px; line-height: 16px; }
.coords { display: grid; grid-template-columns: 18px 37px; border-left: 1px solid #e2ded6; padding-left: 3px; margin-right: 8px; font: 10px/13px "DejaVu Sans Mono", monospace; }
.status .zoom { width: 55px; margin-left: 3px; }
.zoom input { text-align: center; padding: 0; }

.taskbar { display: flex; height: 24px; background: linear-gradient(#f6f4f1, #e2d9c1); }
.taskbar .grip { margin: 8px 4px 0 10px; background: repeating-linear-gradient(#b5ac9a 0 1px, transparent 1px 3px); }
.taskbar button { display: flex; align-items: center; gap: 7px; flex: 0 1 201px; height: 24px; padding: 0 3px; border: 1px solid #a99f8e; border-bottom: 0; background: linear-gradient(#d6cdc0, #b3a794); white-space: nowrap; }
.taskbar button svg { width: 17px; height: 17px; }
.taskbar button.active { background: linear-gradient(#a09d8b, #827f6e); border-color: #8b8877; }
.trash { width: 24px; height: 24px; margin-left: 313px; }
```
FILE: main.js
```js
// Ruler units: 100 px per horizontal block, 250 px per vertical block.
// The first block of each ruler starts outside the window, so it has ticks but no label.
const hunits = document.getElementById('hunits');
const across = Math.ceil((hunits.clientWidth + 57) / 70);
for (let i = 0; i < across; i++) {
  const s = document.createElement('span');
  if (i > 0) s.textContent = -600 + i * 100;
  hunits.append(s);
}
const vunits = document.getElementById('vunits');
const down = Math.ceil((vunits.clientHeight + 71) / 175);
for (let i = 0; i < down; i++) {
  const d = document.createElement('div');
  if (i > 0) {
    for (const c of String(1250 - i * 250)) {
      const s = document.createElement('span');
      s.textContent = c;
      d.append(s);
    }
  }
  vunits.append(d);
}
// Default Inkscape swatches.
const colours = ('000000 1a1a1a 333333 4d4d4d 666666 808080 999999 b3b3b3 cccccc e6e6e6 ececec f2f2f2 f9f9f9 ffffff ' +
  '800000 ff0000 808000 ffff00 008000 00ff00 008080 00ffff 000080 0000ff 800080 ff00ff ' +
  '2b0000 550000 800000 aa0000 d40000 ff0000 ff2a2a ff5555 ff8080 ffaaaa ffd5d5 ' +
  '280b0b 501616 782121 a02c2c c83737 d35f5f de8787 e9afaf f4d7d7 ' +
  '241c1c 483737 6c5353 916f6f ac9393 c8b7b7 e3dbdb ' +
  '2b1100 552200 803300 aa4400 d45500 ff6600 ff7f2a ff9955 ffb380 ffccaa ffe6d5 ' +
  '28170b 502d16 784421 a05a2c c87137 d38d5f deaa87 e9c6af f4e3d7 ' +
  '241f1c 483e37 6c5d53 917c6f ac9d93 c8beb7').split(' ');
const palette = document.getElementById('palette');
for (const c of colours) {
  const b = document.createElement('button');
  b.style.background = '#' + c;
  b.setAttribute('aria-label', '#' + c);
  palette.append(b);
}
```
